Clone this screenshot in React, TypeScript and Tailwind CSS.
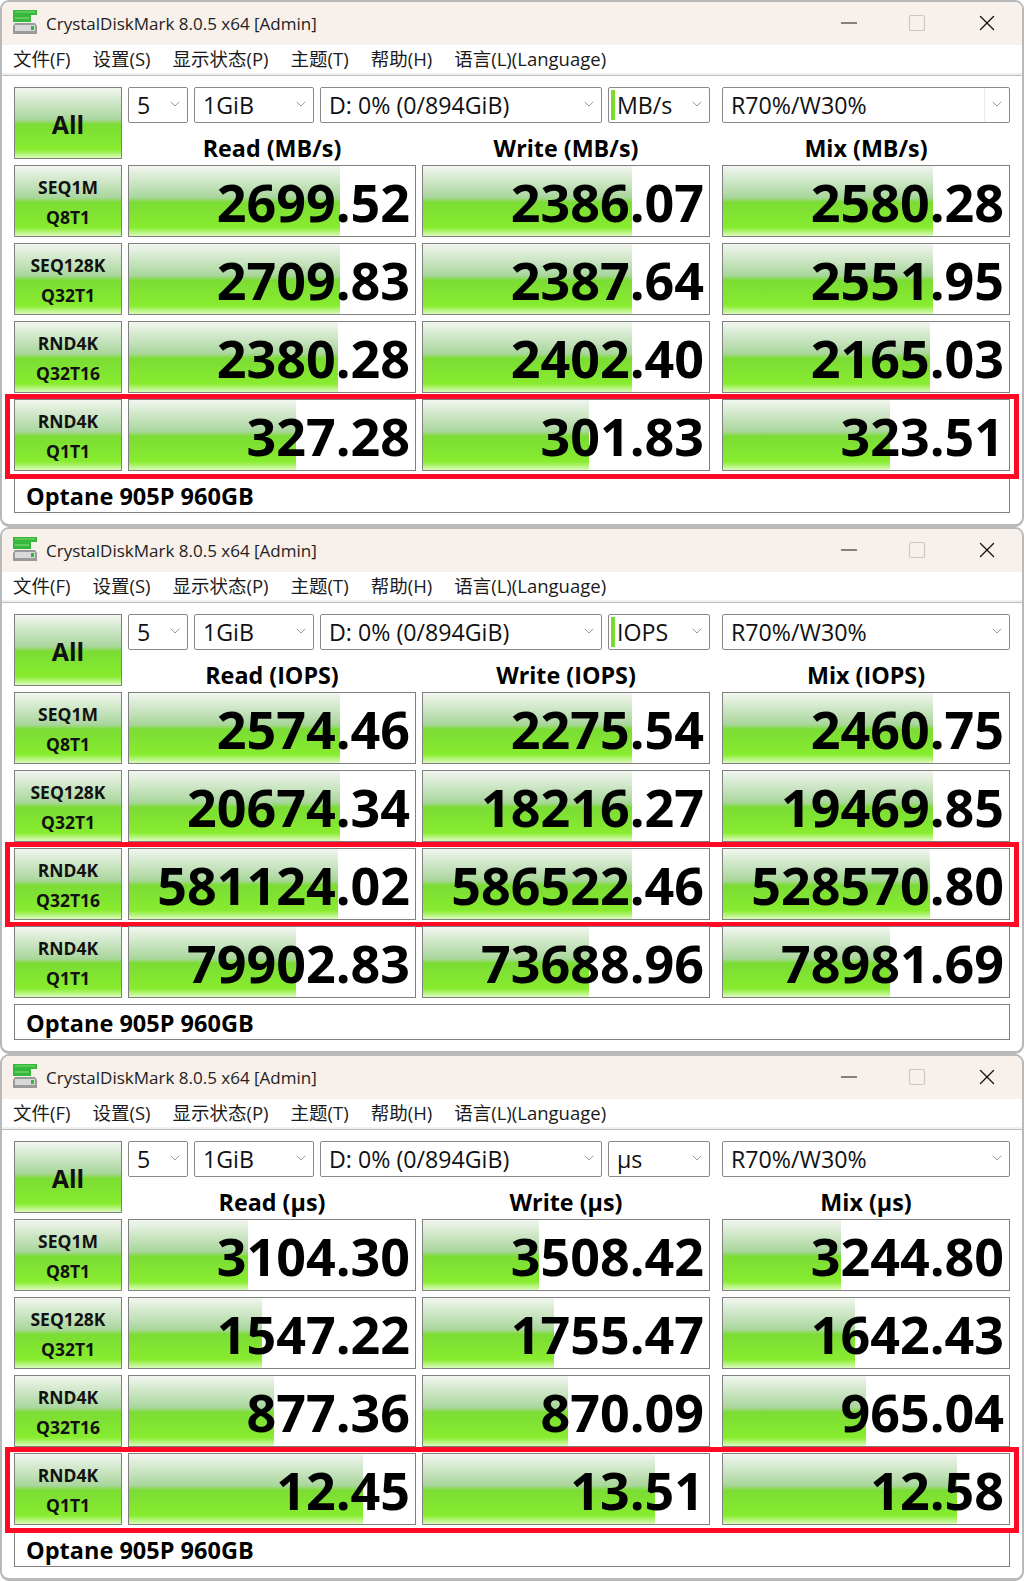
import { ChevronDown, Minus, Square, X } from "lucide-react";

const ui = "font-['Open_Sans','Noto_Sans_CJK_SC',sans-serif]";
const green =
    "bg-[linear-gradient(to_bottom,#f1f6ef_0%,#a9d69c_45%,#7bdc34_52%,#88ec2f_88%,#dcfbbd_100%)]";

type Row = { top: string; bottom: string; value: string; bars: number[] };
type Win = { unit: string; bar: boolean; splitCombo: boolean; highlight: number; overlay: string; rows: Row[] };

const windows: Win[] = [
    {
        unit: "MB/s",
        bar: true,
        splitCombo: true,
        highlight: 3,
        overlay: "-top-[5px] -bottom-[8px]",
        rows: [
            { top: "SEQ1M", bottom: "Q8T1", value: "2699.52 2386.07 2580.28", bars: [211, 209, 210] },
            { top: "SEQ128K", bottom: "Q32T1", value: "2709.83 2387.64 2551.95", bars: [211, 209, 210] },
            { top: "RND4K", bottom: "Q32T16", value: "2380.28 2402.40 2165.03", bars: [209, 209, 207] },
            { top: "RND4K", bottom: "Q1T1", value: "327.28 301.83 323.51", bars: [167, 166, 167] },
        ],
    },
    {
        unit: "IOPS",
        bar: true,
        splitCombo: false,
        highlight: 2,
        overlay: "-top-[6px] -bottom-[7px]",
        rows: [
            { top: "SEQ1M", bottom: "Q8T1", value: "2574.46 2275.54 2460.75", bars: [211, 209, 210] },
            { top: "SEQ128K", bottom: "Q32T1", value: "20674.34 18216.27 19469.85", bars: [211, 209, 210] },
            { top: "RND4K", bottom: "Q32T16", value: "581124.02 586522.46 528570.80", bars: [209, 209, 207] },
            { top: "RND4K", bottom: "Q1T1", value: "79902.83 73688.96 78981.69", bars: [167, 166, 167] },
        ],
    },
    {
        unit: "μs",
        bar: false,
        splitCombo: false,
        highlight: 3,
        overlay: "-top-[6px] -bottom-[8px]",
        rows: [
            { top: "SEQ1M", bottom: "Q8T1", value: "3104.30 3508.42 3244.80", bars: [119, 116, 118] },
            { top: "SEQ128K", bottom: "Q32T1", value: "1547.22 1755.47 1642.43", bars: [133, 131, 132] },
            { top: "RND4K", bottom: "Q32T16", value: "877.36 870.09 965.04", bars: [145, 145, 143] },
            { top: "RND4K", bottom: "Q1T1", value: "12.45 13.51 12.58", bars: [234, 232, 234] },
        ],
    },
];

const menu = ["文件(F)", "设置(S)", "显示状态(P)", "主题(T)", "帮助(H)", "语言(L)(Language)"];

const AppIcon = () => (
    <svg width="24" height="24" viewBox="0 0 24 24" className="shrink-0 -mt-[3px]">
        <path d="M0 0h24v5h-6v7H0z" fill="#35b83c" />
        <path d="M2 2h20" stroke="#7fdc74" strokeWidth="1" />
        <path d="M2 8h14" stroke="#8fe07f" strokeWidth="1" />
        <path d="M18 6h6v6h-6z" fill="#f4f0ea" />
        <path d="M2 13h20l2 3v8H0v-8z" fill="#9a9a9a" />
        <path d="M2 15h20v6H2z" fill="#d9d9d9" />
        <rect x="18" y="16" width="3" height="4" fill="#35b83c" />
    </svg>
);

const Combo = ({ width, text, bar, split }: { width: string; text: string; bar?: boolean; split?: boolean }) => (
    <div className={`${width} h-[36px] flex items-center justify-between bg-white border border-[#8a8a8a] rounded-[2px] text-[23.2px] text-[#111]`}>
        <div className="flex items-center h-full min-w-0">
            {bar && <div className="ml-[2px] w-[4px] h-[30px] bg-[#7bdc2e]" />}
            <span className={`${bar ? "ml-[2px]" : "ml-[8px]"} mt-[2px] whitespace-pre leading-none`}>{text}</span>
        </div>
        <div className={`h-full w-[25px] flex items-center justify-center ${split ? "border-l border-[#ececec]" : ""}`}>
            <ChevronDown size={16} strokeWidth={1} className="text-[#666] -mt-[3px]" />
        </div>
    </div>
);

const Label = ({ top, bottom }: { top: string; bottom: string }) => (
    <div className={`w-[108px] h-[72px] shrink-0 border border-[#808080] ${green} flex flex-col items-center justify-center pt-[1px] text-[17.5px] font-bold leading-[30px] text-[#111]`}>
        <span>{top}</span>
        <span>{bottom}</span>
    </div>
);

const Cell = ({ value, bar, last }: { value: string; bar: number; last?: boolean }) => (
    <div className={`relative w-[288px] h-[72px] shrink-0 border border-[#808080] bg-white ${last ? "ml-[6px]" : ""}`}>
        <div className={`h-full ${green}`} style={{ width: bar }} />
        <span className="absolute right-[5px] top-[2px] text-[52px] leading-[68px] font-bold text-black">{value}</span>
    </div>
);

const Window = ({ win }: { win: Win }) => (
    <div className={`h-[527px] bg-white border-x-2 border-t-2 border-b-[3px] border-[#b9b9b9] rounded-[9px] overflow-hidden relative ${ui}`}>
        <div className="h-[43px] bg-[#f7f0eb] flex items-center pl-[11px]">
            <AppIcon />
            <span className="ml-[9px] text-[17px] text-[#222]">CrystalDiskMark 8.0.5 x64 [Admin]</span>
            <div className="ml-auto flex items-center text-[#111] -mt-[2px]">
                <Minus size={26} strokeWidth={1} className="mr-[45px]" />
                <Square size={20} strokeWidth={1.4} className="text-[#c8c8c8] mr-[47px]" />
                <X size={26} strokeWidth={1.2} className="mr-[22px]" />
            </div>
        </div>
        <div className="h-[28px] flex items-center gap-[22px] pl-[11px] text-[18.5px] text-[#1a1a1a]">
            {menu.map((m) => (
                <span key={m}>{m}</span>
            ))}
        </div>
        <div className="h-[3px] bg-[#f0f0f0] border-b border-[#bcbcbc]" />
        <div className="pt-[11px] pl-[12px]">
            <div className="flex gap-[6px] h-[78px]">
                <div className={`w-[108px] h-[72px] shrink-0 border border-[#808080] ${green} flex items-center justify-center pt-[3px] text-[25px] font-bold text-[#111]`}>
                    All
                </div>
                <div className="flex flex-col">
                    <div className="flex gap-[6px]">
                        <Combo width="w-[60px]" text="5" />
                        <Combo width="w-[120px]" text="1GiB" />
                        <Combo width="w-[282px]" text="D: 0% (0/894GiB)" />
                        <Combo width="w-[102px]" text={win.unit} bar={win.bar} />
                        <Combo width="w-[288px] ml-[6px]" text="R70%/W30%" split={win.splitCombo} />
                    </div>
                    <div className="flex gap-[6px] flex-1 items-center text-[23.3px] font-bold text-black pt-[8px]">
                        <div className="w-[288px] text-center">Read ({win.unit})</div>
                        <div className="w-[288px] text-center">Write ({win.unit})</div>
                        <div className="w-[288px] ml-[6px] text-center">Mix ({win.unit})</div>
                    </div>
                </div>
            </div>
            <div className="flex flex-col gap-[6px]">
                {win.rows.map((row, i) => {
                    const values = row.value.split(" ");
                    return (
                        <div key={i} className="relative flex gap-[6px]">
                            <Label top={row.top} bottom={row.bottom} />
                            <Cell value={values[0]} bar={row.bars[0]} />
                            <Cell value={values[1]} bar={row.bars[1]} />
                            <Cell value={values[2]} bar={row.bars[2]} last />
                            {i === win.highlight && (
                                <div className={`absolute -left-[9px] right-[3px] ${win.overlay} border-[5px] border-[#ff0a24]`} />
                            )}
                        </div>
                    );
                })}
            </div>
            <div className="mt-[6px] w-[996px] h-[36px] border border-[#808080] flex items-center pl-[11px] pt-[3px] text-[23.5px] font-bold text-black">
                Optane 905P 960GB
            </div>
        </div>
    </div>
);

export default function App() {
    return (
        <div className="w-[1024px] h-[1581px] bg-white overflow-hidden">
            {windows.map((win) => (
                <Window key={win.unit} win={win} />
            ))}
        </div>
    );
}
